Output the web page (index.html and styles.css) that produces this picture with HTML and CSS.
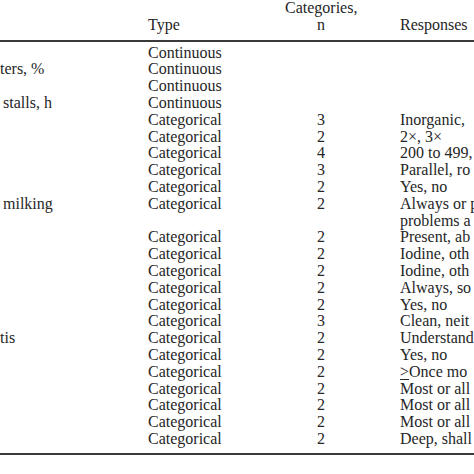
FILE: index.html
```html
<!DOCTYPE html>
<html>
<head>
<meta charset="utf-8">
<link rel="stylesheet" href="styles.css">
</head>
<body>
<table class="tbl">
  <colgroup>
    <col class="c-var"><col class="c-type"><col class="c-n"><col class="c-resp">
  </colgroup>
  <thead>
    <tr>
      <th class="var"></th>
      <th class="type">Type</th>
      <th class="n">Categories,<br>n</th>
      <th class="resp">Responses</th>
    </tr>
  </thead>
  <tbody>
    <tr class="first"><td class="var"></td><td>Continuous</td><td class="n"></td><td class="resp"></td></tr>
    <tr><td class="var">ters, %</td><td>Continuous</td><td class="n"></td><td class="resp"></td></tr>
    <tr><td class="var"></td><td>Continuous</td><td class="n"></td><td class="resp"></td></tr>
    <tr><td class="var ind">stalls, h</td><td>Continuous</td><td class="n"></td><td class="resp"></td></tr>
    <tr><td class="var"></td><td>Categorical</td><td class="n">3</td><td class="resp">Inorganic,</td></tr>
    <tr><td class="var"></td><td>Categorical</td><td class="n">2</td><td class="resp">2×, 3×</td></tr>
    <tr><td class="var"></td><td>Categorical</td><td class="n">4</td><td class="resp">200 to 499,</td></tr>
    <tr><td class="var"></td><td>Categorical</td><td class="n">3</td><td class="resp">Parallel, ro</td></tr>
    <tr><td class="var"></td><td>Categorical</td><td class="n">2</td><td class="resp">Yes, no</td></tr>
    <tr><td class="var ind">milking</td><td>Categorical</td><td class="n">2</td><td class="resp">Always or p<br>problems a</td></tr>
    <tr><td class="var"></td><td>Categorical</td><td class="n">2</td><td class="resp">Present, ab</td></tr>
    <tr><td class="var"></td><td>Categorical</td><td class="n">2</td><td class="resp">Iodine, oth</td></tr>
    <tr><td class="var"></td><td>Categorical</td><td class="n">2</td><td class="resp">Iodine, oth</td></tr>
    <tr><td class="var"></td><td>Categorical</td><td class="n">2</td><td class="resp">Always, so</td></tr>
    <tr><td class="var"></td><td>Categorical</td><td class="n">2</td><td class="resp">Yes, no</td></tr>
    <tr><td class="var"></td><td>Categorical</td><td class="n">3</td><td class="resp">Clean, neit</td></tr>
    <tr><td class="var">tis</td><td>Categorical</td><td class="n">2</td><td class="resp">Understand</td></tr>
    <tr><td class="var"></td><td>Categorical</td><td class="n">2</td><td class="resp">Yes, no</td></tr>
    <tr><td class="var"></td><td>Categorical</td><td class="n">2</td><td class="resp"><span class="geq">&gt;</span>Once mo</td></tr>
    <tr><td class="var"></td><td>Categorical</td><td class="n">2</td><td class="resp">Most or all</td></tr>
    <tr><td class="var"></td><td>Categorical</td><td class="n">2</td><td class="resp">Most or all</td></tr>
    <tr><td class="var"></td><td>Categorical</td><td class="n">2</td><td class="resp">Most or all</td></tr>
    <tr class="last"><td class="var"></td><td>Categorical</td><td class="n">2</td><td class="resp">Deep, shall</td></tr>
  </tbody>
</table>
</body>
</html>
```

FILE: styles.css
```css
html, body {
  margin: 0;
  padding: 0;
  overflow: hidden;
  background: #ffffff;
}

body {
  width: 474px;
  height: 474px;
  font-family: "Liberation Serif", "Times New Roman", serif;
  font-size: 16px;
  color: #262626;
}

.tbl {
  border-collapse: collapse;
  table-layout: fixed;
  width: 474px;
  line-height: 16.8px;
}

.c-var { width: 148px; }
.c-type { width: 137px; }
.c-n { width: 72px; }
.c-resp { width: 117px; }

.tbl th,
.tbl td {
  padding: 0;
  font-weight: normal;
  text-align: left;
  white-space: nowrap;
  vertical-align: top;
}

.tbl thead th {
  vertical-align: bottom;
  padding-bottom: 6px;
  border-bottom: 2px solid #3a3a3a;
}

.tbl .n {
  text-align: center;
}

.tbl .resp {
  padding-left: 43px;
}

.tbl .ind {
  padding-left: 3px;
}

.tbl tr.first td {
  padding-top: 3px;
}

.tbl tr.last td {
  padding-bottom: 5px;
  border-bottom: 2px solid #3a3a3a;
}

.geq {
  text-decoration: underline;
  text-underline-offset: 2px;
}
```
